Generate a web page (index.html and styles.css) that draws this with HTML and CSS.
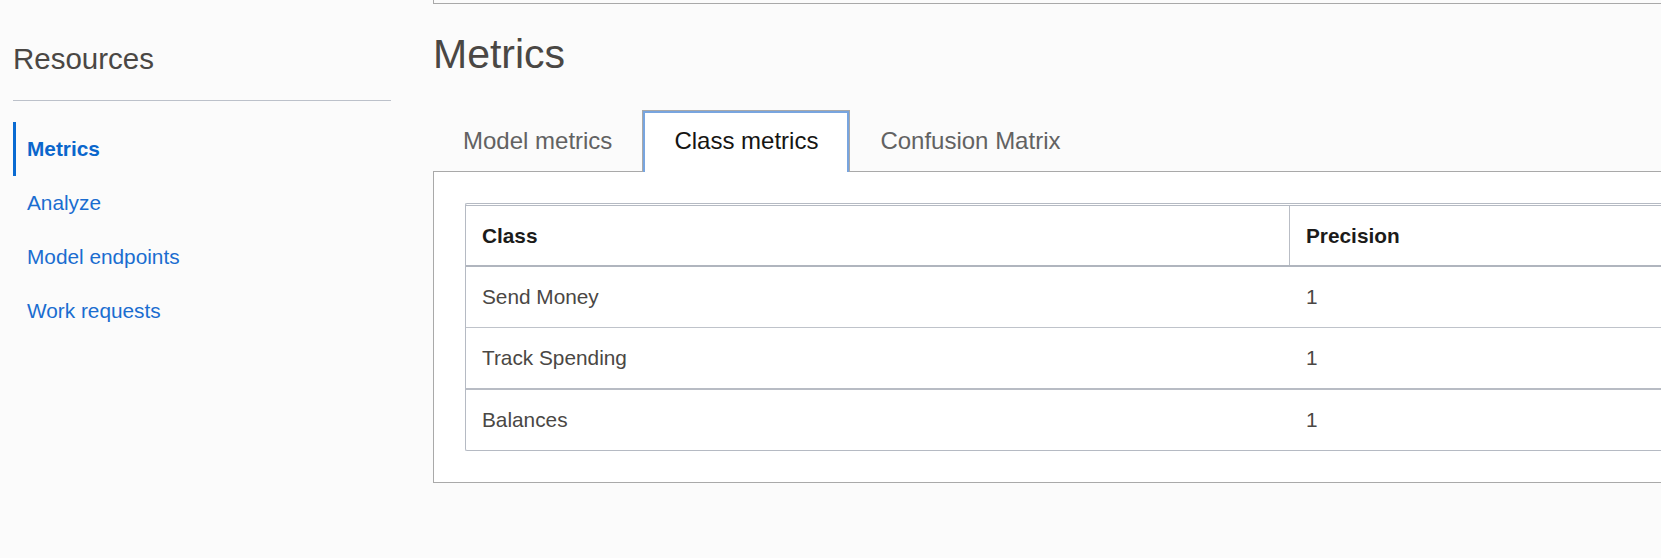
FILE: index.html
```html
<!DOCTYPE html>
<html lang="en">
<head>
<meta charset="utf-8">
<title>Metrics</title>
<link rel="stylesheet" href="styles.css">
</head>
<body>
<div class="page">
  <aside class="sidebar">
    <h2 class="side-title">Resources</h2>
    <hr class="side-rule">
    <nav class="side-nav">
      <a class="nav-item active" href="#">Metrics</a>
      <a class="nav-item" href="#">Analyze</a>
      <a class="nav-item" href="#">Model endpoints</a>
      <a class="nav-item" href="#">Work requests</a>
    </nav>
  </aside>
  <main class="main">
    <div class="prev-panel"></div>
    <h1 class="page-title">Metrics</h1>
    <div class="tabs">
      <div class="tab">Model metrics</div>
      <div class="tab active">Class metrics</div>
      <div class="tab">Confusion Matrix</div>
    </div>
    <section class="panel">
      <div class="table-wrap">
        <div class="row head">
          <div class="cell first">Class</div>
          <div class="cell">Precision</div>
        </div>
        <div class="row body">
          <div class="cell first">Send Money</div>
          <div class="cell">1</div>
        </div>
        <div class="row body thick">
          <div class="cell first">Track Spending</div>
          <div class="cell">1</div>
        </div>
        <div class="row body last">
          <div class="cell first">Balances</div>
          <div class="cell">1</div>
        </div>
      </div>
    </section>
  </main>
</div>
</body>
</html>
```

FILE: styles.css
```css
html, body {
  margin: 0;
  padding: 0;
}
body {
  background: #fbfbfb;
  font-family: "Liberation Sans", Arial, sans-serif;
  overflow: hidden;
  width: 1661px;
  height: 558px;
}
.page {
  display: flex;
  align-items: flex-start;
}
.sidebar {
  flex: 0 0 378px;
  margin-left: 13px;
}
.side-title {
  margin: 41px 0 0 0;
  font-size: 29.5px;
  line-height: 35px;
  font-weight: normal;
  color: #4a4744;
}
.side-rule {
  margin: 24px 0 0 0;
  border: 0;
  border-top: 1px solid #bcc1ca;
  height: 0;
}
.side-nav {
  margin-top: 21px;
  display: flex;
  flex-direction: column;
}
.nav-item {
  display: block;
  height: 54px;
  line-height: 54px;
  padding-left: 14px;
  font-size: 20.8px;
  color: #1a6dd0;
  text-decoration: none;
}
.nav-item.active {
  border-left: 3px solid #0a6bd2;
  padding-left: 11px;
  font-weight: bold;
  color: #0a66cc;
}
.main {
  flex: 0 0 1300px;
  margin-left: 42px;
}
.prev-panel {
  height: 3px;
  border-left: 1px solid #a9a9a9;
  border-bottom: 1px solid #a9a9a9;
}
.page-title {
  margin: 26px 0 0 0;
  font-size: 41px;
  line-height: 48px;
  font-weight: normal;
  color: #4a4744;
}
.tabs {
  display: flex;
  margin-top: 32px;
  position: relative;
  z-index: 1;
}
.tab {
  height: 61px;
  line-height: 61px;
  padding: 0 30px;
  font-size: 24px;
  color: #626262;
  box-sizing: border-box;
}
.tab.active {
  height: 62px;
  margin-bottom: -1px;
  background: #ffffff;
  color: #161513;
  border: 1px solid #a9a9a9;
  border-bottom: 0;
  line-height: 59px;
  padding: 0 31px;
  box-shadow: inset 2px 0 0 #78a5df, inset -2px 0 0 #78a5df, inset 0 2px 0 #78a5df;
}
.panel {
  background: #ffffff;
  border: 1px solid #a9a9a9;
  padding: 31px;
}
.table-wrap {
  background: #ffffff;
  border-top: 1px solid #b5bac3;
  border-left: 1px solid #b5bac3;
  border-bottom: 1px solid #b5bac3;
  border-radius: 2px 0 0 2px;
}
.row {
  display: grid;
  grid-template-columns: 824px 1fr;
}
.row.head {
  margin-top: 1px;
  border-top: 1px solid #b5bac3;
  border-bottom: 2px solid #b0b5be;
  height: 59px;
}
.row.body {
  height: 60px;
  border-bottom: 1px solid #bfc3ca;
}
.row.body.thick {
  border-bottom: 2px solid #b8bcc4;
}
.row.body.last {
  border-bottom: 0;
}
.cell {
  padding-left: 16px;
  display: flex;
  align-items: center;
  font-size: 20.8px;
  color: #4a4744;
  box-sizing: border-box;
}
.row.head .cell {
  font-weight: bold;
  color: #1c1b1a;
}
.row.head .cell.first {
  border-right: 1px solid #b9bdc5;
}
```
